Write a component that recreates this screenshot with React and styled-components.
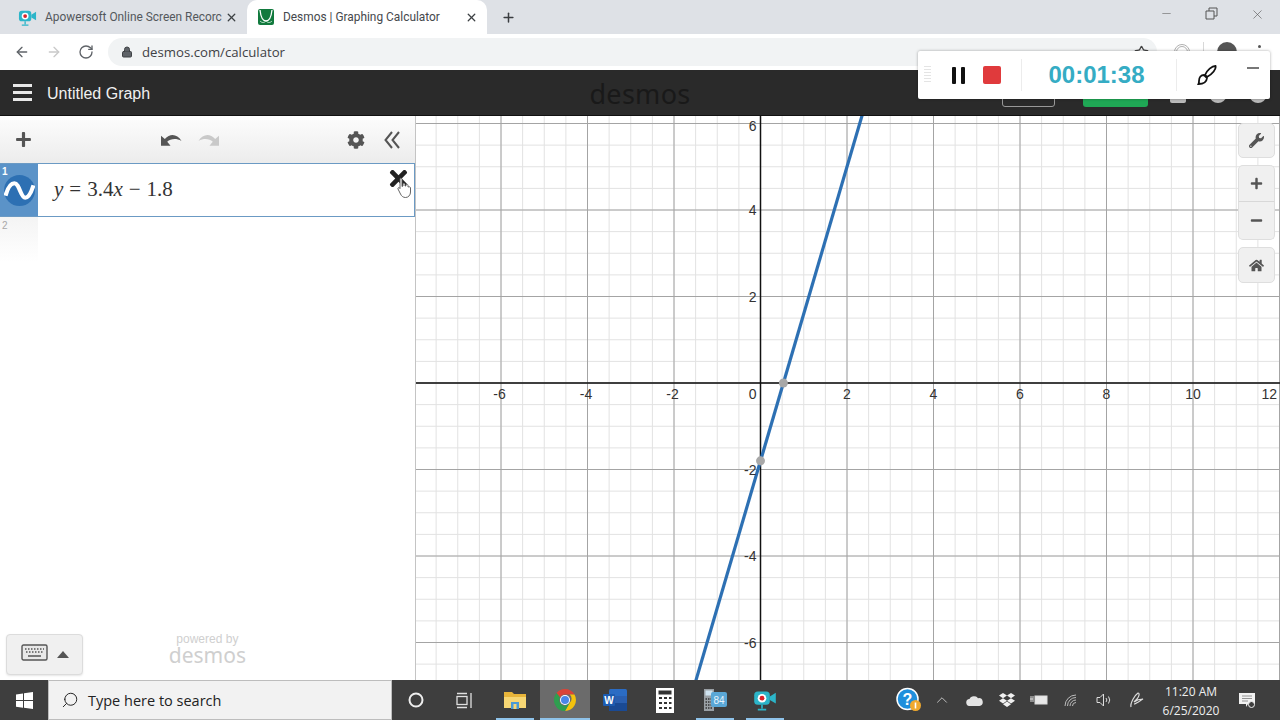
import styled, { createGlobalStyle } from "styled-components";
import { FaCog, FaHome, FaMinus, FaPlus, FaTimes, FaWrench } from "react-icons/fa";
import {
  ArrowLeft,
  ArrowRight,
  ChevronUp,
  Lock,
  Minus,
  Plus,
  RotateCw,
  Search,
  Star,
  X,
} from "lucide-react";

const GlobalStyle = createGlobalStyle`
  html, body {
    margin: 0;
    padding: 0;
    background: #fff;
    font-family: "Liberation Sans", Arial, sans-serif;
  }
`;

const Page = styled.div`
  position: relative;
  display: flex;
  flex-direction: column;
  width: 1280px;
  height: 720px;
  overflow: hidden;
`;

/* chrome tabs */
const TabStrip = styled.div`
  display: flex;
  align-items: stretch;
  flex: 0 0 34px;
  background: #dee1e6;
  color: #3c4043;
`;

const Tab = styled.div`
  display: flex;
  align-items: center;
  box-sizing: border-box;
  width: ${(p) => p.$width};
  padding: ${(p) => p.$padding};
  background: ${(p) => (p.$active ? "#fff" : "transparent")};
  border-radius: 10px 10px 0 0;
  font: 11.9px Roboto, "Noto Sans", sans-serif;
`;

const TabTitle = styled.span`
  flex: 1;
  margin-left: ${(p) => p.$gap};
  white-space: nowrap;
  color: ${(p) => (p.$active ? "#45484c" : "#54585c")};
`;

const NewTab = styled.div`
  display: flex;
  align-items: center;
  margin-left: 14px;
  color: #3a3d40;
`;

const WindowControls = styled.div`
  display: flex;
  align-items: flex-start;
  gap: 32px;
  margin-left: auto;
  padding: 7px 15px 0 0;
  color: #555;
`;

/* address bar */
const Toolbar = styled.div`
  display: flex;
  align-items: center;
  flex: 0 0 36px;
  box-sizing: border-box;
  padding-left: 14px;
  background: #fff;
`;

const NavIcons = styled.div`
  display: flex;
  align-items: center;
  gap: 16px;
  color: #5f6368;
`;

const AddressPill = styled.div`
  display: flex;
  align-items: center;
  gap: 9px;
  width: 1049px;
  height: 28px;
  box-sizing: border-box;
  margin-left: 14px;
  padding: 0 8px 0 13px;
  background: #f1f3f4;
  border-radius: 14px;
  font: 13.2px "Open Sans", "Noto Sans", sans-serif;
  color: #3f4245;
`;

const BookmarkStar = styled.span`
  display: flex;
  margin-left: auto;
  color: #444;
`;

const ToolbarEnd = styled.div`
  display: flex;
  align-items: center;
  gap: 13px;
  margin-left: 17px;
  color: #5f6368;
`;

const Ring = styled.span`
  width: 16px;
  height: 16px;
  box-sizing: border-box;
  border: 3px double #b0b0b0;
  border-radius: 50%;
`;

const ToolbarSeparator = styled.span`
  width: 1px;
  height: 20px;
  background: #d8d8d8;
`;

const Avatar = styled.span`
  width: 20px;
  height: 20px;
  border-radius: 50%;
  background: #555;
`;

const Dots = styled.span`
  display: flex;
  flex-direction: column;
  gap: 3px;
  margin-left: 8px;

  i {
    width: 3px;
    height: 3px;
    border-radius: 50%;
    background: #555;
  }
`;

/* desmos header */
const AppHeader = styled.header`
  position: relative;
  display: flex;
  align-items: center;
  flex: 0 0 46px;
  box-sizing: border-box;
  padding-left: 13px;
  background: #2a2a2a;
  border-bottom: 1px solid #111;
  color: #f0f0f0;
`;

const Burger = styled.div`
  display: flex;
  flex-direction: column;
  gap: 4px;
  width: 19px;
  margin-right: 15px;

  span {
    height: 3px;
    background: #e8e8e8;
  }
`;

const GraphTitle = styled.div`
  margin-top: 2px;
  font-size: 16px;
`;

const Logo = styled.div`
  position: absolute;
  left: 0;
  right: 0;
  top: 5px;
  text-align: center;
  font: 27px "Noto Sans", sans-serif;
  letter-spacing: 0.3px;
  color: #191919;
`;

const HeaderButton = styled.div`
  position: absolute;
  top: 21px;
  left: ${(p) => p.$left};
  width: ${(p) => p.$width};
  height: 16px;
  box-sizing: border-box;
  border: ${(p) => (p.$green ? "none" : "1px solid #999")};
  border-radius: 3px;
  background: ${(p) => (p.$green ? "#1fa855" : "transparent")};
`;

const HeaderDot = styled.div`
  position: absolute;
  top: 20px;
  left: ${(p) => p.$left};
  width: 16px;
  height: 13px;
  border-radius: ${(p) => (p.$square ? "2px" : "50%")};
  background: #bbb;
`;

const Main = styled.main`
  display: flex;
  flex: 1;
  min-height: 0;
`;

/* expression list */
const Panel = styled.aside`
  position: relative;
  display: flex;
  flex-direction: column;
  flex: 0 0 415px;
  border-right: 1px solid #c4c4c4;
  background: #fff;
`;

const PanelTools = styled.div`
  display: flex;
  align-items: center;
  flex: 0 0 47px;
  padding: 0 15px;
  color: #555;
  background: linear-gradient(#fdfdfd, #ececec);
`;

const UndoGroup = styled.div`
  display: flex;
  gap: 16px;
  margin: 0 0 3px 129px;
`;

const ToolEnd = styled.div`
  display: flex;
  align-items: center;
  gap: 19px;
  margin-left: auto;
`;

const Faded = styled.span`
  display: flex;
  color: #c9c9c9;
`;

const Expression = styled.div`
  display: flex;
  height: 54px;
  box-sizing: border-box;
  border: 1px solid #6b9ac4;
  border-left: none;
`;

const ExpressionTab = styled.div`
  position: relative;
  display: flex;
  align-items: center;
  justify-content: center;
  width: 38px;
  background: #5b93c8;
  color: #fff;
  font: bold 10px "Liberation Sans", sans-serif;
`;

const RowNumber = styled.span`
  position: absolute;
  top: 2px;
  left: 2px;
`;

const Formula = styled.div`
  flex: 1;
  display: flex;
  gap: 6px;
  padding: 13px 0 0 16px;
  font: 21px "Liberation Serif", serif;
  color: #333;

  i {
    font-style: italic;
  }
`;

const RemoveButton = styled.div`
  position: absolute;
  top: 50px;
  left: 386px;
  font-size: 25px;
  line-height: 0;
  color: #222;
`;

const Cursor = styled.svg`
  position: absolute;
  top: 61px;
  left: 397px;
`;

const EmptyRow = styled.div`
  width: 38px;
  height: 45px;
  box-sizing: border-box;
  padding: 3px 2px;
  font-size: 10px;
  color: #a8a8a8;
  background: linear-gradient(#f4f4f4, #fff);
`;

const PanelFoot = styled.div`
  display: flex;
  align-items: flex-end;
  justify-content: space-between;
  margin-top: auto;
  padding: 0 169px 5px 6px;
`;

const KeyboardButton = styled.div`
  display: flex;
  align-items: center;
  justify-content: center;
  gap: 9px;
  width: 77px;
  height: 41px;
  box-sizing: border-box;
  border: 1px solid #dcdcdc;
  border-radius: 4px;
  background: #f0f0f0;
  box-shadow: 0 1px 2px rgba(0, 0, 0, 0.1);
  color: #555;
`;

const KeyboardGlyph = styled.span`
  display: flex;
  margin-bottom: 5px;
`;

const Powered = styled.div`
  display: flex;
  flex-direction: column;
  align-items: center;
  margin-bottom: 10px;
  color: #cfcfcf;
`;

const PoweredBy = styled.span`
  font-size: 12px;
  line-height: 13px;
`;

const PoweredLogo = styled.span`
  font: 21px/19px "Noto Sans", sans-serif;
`;

/* graph paper */
const Graph = styled.section`
  position: relative;
  flex: 1;
  overflow: hidden;
  background: #fff;
`;

const GraphTools = styled.div`
  position: absolute;
  top: 7px;
  right: 5px;
  display: flex;
  flex-direction: column;
  gap: 7px;
`;

const GraphButton = styled.div`
  display: flex;
  align-items: center;
  justify-content: center;
  width: 37px;
  height: ${(p) => p.$height || "36px"};
  box-sizing: border-box;
  border: 1px solid #dedede;
  border-radius: 5px;
  background: #f0f0f0;
  color: #555;
  font-size: 15px;
`;

const ZoomGroup = styled.div`
  display: flex;
  flex-direction: column;

  & > div:first-child {
    border-radius: 5px 5px 0 0;
    border-bottom: 1px solid #d8d8d8;
  }

  & > div:last-child {
    border-radius: 0 0 5px 5px;
    border-top: none;
  }
`;

/* recorder widget */
const Recorder = styled.div`
  position: absolute;
  top: 51px;
  left: 918px;
  display: flex;
  align-items: center;
  width: 352px;
  height: 48px;
  background: #fff;
  border-radius: 2px;
  box-shadow: 0 0 3px rgba(0, 0, 0, 0.35);
`;

const Grip = styled.div`
  width: 7px;
  height: 18px;
  margin-left: 6px;
  background: repeating-linear-gradient(#e4e4e4 0 1px, #fff 1px 3px);
`;

const PauseIcon = styled.div`
  display: flex;
  gap: 5px;
  margin-left: 21px;

  span {
    width: 4px;
    height: 17px;
    border-radius: 1px;
    background: #111;
  }
`;

const StopIcon = styled.div`
  width: 18px;
  height: 18px;
  margin-left: 18px;
  border-radius: 2px;
  background: #e03a3c;
`;

const Divider = styled.div`
  width: 1px;
  height: 32px;
  background: #ececec;
  margin-left: ${(p) => p.$left};
`;

const Timer = styled.div`
  box-sizing: border-box;
  width: 154px;
  padding-right: 5px;
  text-align: center;
  font-size: 24px;
  font-weight: bold;
  color: #35acc4;
`;

const BrushBox = styled.div`
  display: flex;
  margin-left: 20px;
`;

const RecorderMin = styled.div`
  position: absolute;
  top: 16px;
  right: 11px;
  width: 12px;
  height: 1.5px;
  background: #777;
`;

/* windows taskbar */
const Taskbar = styled.footer`
  display: flex;
  align-items: center;
  flex: 0 0 40px;
  background: #3e3e3e;
  color: #f2f2f2;
`;

const StartButton = styled.div`
  display: flex;
  align-items: center;
  justify-content: center;
  width: 48px;
  height: 100%;
`;

const SearchBox = styled.div`
  display: flex;
  align-items: center;
  gap: 9px;
  width: 344px;
  height: 100%;
  box-sizing: border-box;
  padding-left: 12px;
  background: #f2f2f2;
  border: 1px solid #bdbdbd;
  color: #222;
  font: 14.5px "Open Sans", "Noto Sans", sans-serif;
`;

const TaskIcon = styled.div`
  position: relative;
  display: flex;
  align-items: center;
  justify-content: center;
  width: ${(p) => p.$width || "50px"};
  height: 100%;
  margin-right: ${(p) => p.$after || "0"};
  background: ${(p) => (p.$active ? "#6b6b6b" : "transparent")};

  &::after {
    content: "";
    display: ${(p) => (p.$running ? "block" : "none")};
    position: absolute;
    left: ${(p) => (p.$active ? "0" : "6px")};
    right: ${(p) => (p.$active ? "0" : "6px")};
    bottom: 0;
    height: 2px;
    background: #8fc3ea;
  }
`;

const Tray = styled.div`
  display: flex;
  align-items: center;
  height: 100%;
  margin-left: auto;
  padding-right: 12px;
`;

const TrayIcon = styled.div`
  display: flex;
  align-items: center;
  justify-content: center;
  width: ${(p) => p.$width || "32.5px"};
  color: #e6e6e6;
`;

const Clock = styled.div`
  width: 70px;
  margin-left: 3px;
  padding-top: 1px;
  text-align: center;
  white-space: nowrap;
  font: 12px/19px "Open Sans", "Noto Sans", sans-serif;
  color: #eee;
`;

const ORIGIN_X = 344.5;
const ORIGIN_Y = 267;
const UNIT = 43.25;
const GRAPH_W = 864;
const GRAPH_H = 564;

function range(from, to, step) {
  const out = [];
  for (let v = from; v <= to; v += step) out.push(v);
  return out;
}

function Plot() {
  const px = (x) => ORIGIN_X + x * UNIT;
  const py = (y) => ORIGIN_Y - y * UNIT;
  const minorX = range(-8, 12.5, 0.5);
  const minorY = range(-7, 6.5, 0.5);
  const majorX = range(-8, 12, 2);
  const majorY = range(-6, 6, 2);
  const xLabels = majorX.filter((v) => v !== 0 && v > -8 && v < 12);
  const yLabels = majorY.filter((v) => v !== 0);

  return (
    <svg width={GRAPH_W} height={GRAPH_H} style={{ display: "block" }}>
      {minorX.map((v) => (
        <line key={v} x1={px(v)} x2={px(v)} y1={0} y2={GRAPH_H} stroke="#e2e2e2" />
      ))}
      {minorY.map((v) => (
        <line key={v} y1={py(v)} y2={py(v)} x1={0} x2={GRAPH_W} stroke="#e2e2e2" />
      ))}
      {majorX.map((v) => (
        <line key={v} x1={px(v)} x2={px(v)} y1={0} y2={GRAPH_H} stroke="#a4a4a4" />
      ))}
      {majorY.map((v) => (
        <line key={v} y1={py(v)} y2={py(v)} x1={0} x2={GRAPH_W} stroke="#a4a4a4" />
      ))}
      <line x1={px(0)} x2={px(0)} y1={0} y2={GRAPH_H} stroke="#111" strokeWidth="1.5" />
      <line y1={py(0)} y2={py(0)} x1={0} x2={GRAPH_W} stroke="#111" strokeWidth="1.5" />
      <line
        x1={px(-1.55)}
        y1={py(3.4 * -1.55 - 1.8)}
        x2={px(2.4)}
        y2={py(3.4 * 2.4 - 1.8)}
        stroke="#2d70b3"
        strokeWidth="3.2"
      />
      <circle cx={px(1.8 / 3.4)} cy={py(0)} r="4.5" fill="#a8a8a8" />
      <circle cx={px(0)} cy={py(-1.8)} r="4.5" fill="#a8a8a8" />
      <g fontFamily="Liberation Sans, sans-serif" fontSize="14" fill="#333">
        {xLabels.map((v) => (
          <text key={v} x={px(v) - (v < 0 ? 1.5 : 0)} y={py(0) + 16} textAnchor="middle">
            {v}
          </text>
        ))}
        <text x={GRAPH_W - 3} y={py(0) + 16} textAnchor="end">
          12
        </text>
        {yLabels.map((v) => (
          <text key={v} x={px(0) - 4} y={Math.max(py(v) + 5, 15)} textAnchor="end">
            {v}
          </text>
        ))}
        <text x={px(0) - 4} y={py(0) + 16} textAnchor="end">
          0
        </text>
      </g>
    </svg>
  );
}

function DesmosFavicon() {
  return (
    <svg width="16" height="16" viewBox="0 0 16 16">
      <rect width="16" height="16" rx="2" fill="#127a3e" />
      <path d="M2 1c1 9 3 11 6 11s5-2 6-11" fill="none" stroke="#fff" strokeWidth="1.3" />
      <path d="M2 12c2 2 4 2 6 0 2 2 4 2 6 0" fill="none" stroke="#bfe6cc" strokeWidth="1" />
    </svg>
  );
}

function RecorderIcon({ size = 20 }) {
  return (
    <svg width={size} height={size} viewBox="0 0 20 20">
      <rect x="1" y="3" width="13" height="11" rx="3" fill="#2cb5c9" />
      <path d="M14 7l5-3v9l-5-3z" fill="#2cb5c9" />
      <circle cx="7.5" cy="8.5" r="3.6" fill="#fff" />
      <circle cx="7.5" cy="8.5" r="2" fill="#d8232a" />
      <path d="M7.5 14v3M4 18h7" stroke="#2cb5c9" strokeWidth="1.4" />
    </svg>
  );
}

function WaveBadge() {
  return (
    <svg width="31" height="31" viewBox="0 0 30 30">
      <circle cx="15" cy="15" r="15" fill="#2d70b3" />
      <path
        d="M1.500 20C4 11 7 8 10 8c5 0 6 14 10.500 14 3 0 5.500-4 8-12"
        fill="none"
        stroke="#fff"
        strokeWidth="4"
      />
    </svg>
  );
}

function HandCursor() {
  return (
    <Cursor width="16" height="22" viewBox="0 0 16 22">
      <path
        d="M3 1.5c1-.8 2 0 2 1v7l1-.5V6.500c1-.7 2 0 2 .8V9l1-.2V7.500c1-.6 2 0 2 .8V10l1-.2c.8-.2 1.500.4 1.500 1.200V15c0 3-2 5.500-5 5.500-2.500 0-4-1.500-5-3.500L1 12c-.5-1 .8-2 1.700-1L3 11.500z"
        fill="#fff"
        stroke="#555"
        strokeWidth="0.9"
      />
    </Cursor>
  );
}

function UndoArrow({ flip }) {
  return (
    <svg
      width="21"
      height="15"
      viewBox="0 0 22 15"
      fill="currentColor"
      style={flip ? { transform: "scaleX(-1)" } : undefined}
    >
      <path d="M0 4.500V15h10l-3.500-4C10 7.500 16 7 21.500 10 17 3 10 1.500 4 8z" />
    </svg>
  );
}

function CollapseIcon() {
  return (
    <svg width="16" height="18" viewBox="0 0 16 18" fill="none" stroke="#555" strokeWidth="2">
      <path d="M8 1L1.500 9 8 17M15 1L8.500 9l6.500 8" />
    </svg>
  );
}

function KeyboardIcon() {
  return (
    <svg width="27" height="17" viewBox="0 0 27 17">
      <rect x="1" y="1" width="25" height="15" rx="1.5" fill="#e8e8e8" stroke="#555" strokeWidth="1.4" />
      <path d="M4 5h19M5 8h17" stroke="#555" strokeWidth="1.5" strokeDasharray="1.500 1.500" />
      <path d="M7 12h13" stroke="#555" strokeWidth="1.5" />
    </svg>
  );
}

function BrushIcon() {
  return (
    <svg width="20" height="20" viewBox="0 0 20 20">
      <path d="M8 10C10 5 15 1 18.500 1c1 3-3 8-8.500 11z" fill="#fff" stroke="#111" strokeWidth="1.800" />
      <path d="M7 10c-3 0-5 2-5 6 0 1 0 2-.5 3 3 0 8-1 8.500-6z" fill="#fff" stroke="#111" strokeWidth="1.800" />
    </svg>
  );
}

function WindowsLogo() {
  return (
    <svg width="17" height="17" viewBox="0 0 17 17" fill="#fff">
      <path d="M0 2.400l7-1v6.700H0zM8 1.200L17 0v8.100H8zM0 9h7v6.700l-7-1zM8 9h9v8l-9-1.300z" />
    </svg>
  );
}

function ExplorerIcon() {
  return (
    <svg width="24" height="20" viewBox="0 0 24 20">
      <path d="M1 2h8l2 2h12v14H1z" fill="#e8b53a" />
      <path d="M1 7h22v11H1z" fill="#f7d774" />
      <path d="M8 12h8v7H8z" fill="#4a9bd4" />
      <path d="M10.500 14h3v5h-3z" fill="#f7d774" />
    </svg>
  );
}

function ChromeIcon() {
  return (
    <svg width="22" height="22" viewBox="0 0 22 22">
      <path d="M11 0a11 11 0 0 1 9.500 5.500H11a5.500 5.500 0 0 0-5 3L2.500 4A11 11 0 0 1 11 0z" fill="#db4437" />
      <path d="M20.500 5.500A11 11 0 0 1 11 22l4.700-8.200a5.500 5.500 0 0 0 0-8.300z" fill="#f4c20d" />
      <path d="M11 22A11 11 0 0 1 2.500 4L6 8.500a5.500 5.500 0 0 0 6 8l3.700-2.700z" fill="#2f9e4f" />
      <circle cx="11" cy="11" r="5" fill="#fff" />
      <circle cx="11" cy="11" r="4" fill="#4a86e8" />
    </svg>
  );
}

function WordIcon() {
  return (
    <svg width="24" height="22" viewBox="0 0 24 22">
      <rect x="6" y="0" width="18" height="22" rx="1.500" fill="#2b6cc4" />
      <rect x="6" y="14" width="18" height="8" fill="#1a4a94" />
      <rect x="6" y="7" width="18" height="7" fill="#2a5fb0" />
      <rect x="0" y="5" width="12" height="12" rx="1" fill="#1c5bb0" />
      <text x="6" y="14.500" textAnchor="middle" fontSize="10" fontWeight="bold" fill="#fff" fontFamily="Liberation Sans, sans-serif">
        W
      </text>
    </svg>
  );
}

function CalculatorIcon() {
  return (
    <svg width="18" height="25" viewBox="0 0 18 25">
      <rect width="18" height="25" fill="#fff" />
      <rect x="2.500" y="2.500" width="13" height="4" fill="#333" />
      <path d="M3 10h3M8 10h3M13 10h2.500M3 15h3M8 15h3M13 15h2.500M3 20h3M8 20h3M13 20h2.500" stroke="#333" strokeWidth="2" />
    </svg>
  );
}

function PhoneCalcIcon() {
  return (
    <svg width="24" height="24" viewBox="0 0 24 24">
      <rect x="1" y="1" width="10" height="22" fill="#9aa0a5" />
      <rect x="2.500" y="2.500" width="7" height="5" fill="#cfe3f0" />
      <path d="M2.500 11h7M2.500 14h7M2.500 17h7M2.500 20h7" stroke="#333" strokeWidth="1.500" strokeDasharray="1.500 1" />
      <rect x="8" y="4" width="16" height="15" rx="2" fill="#5aa7d6" />
      <text x="16" y="15.500" textAnchor="middle" fontSize="10" fill="#e8f4fb" fontFamily="Liberation Sans, sans-serif">
        84
      </text>
    </svg>
  );
}

function TaskViewIcon() {
  return (
    <svg width="17" height="17" viewBox="0 0 17 17" fill="none" stroke="#e0e0e0" strokeWidth="1.300">
      <rect x="1" y="4.500" width="10" height="8" />
      <path d="M1 1.500h10M1 15.500h10M15 1v15" />
    </svg>
  );
}

function HelpIcon() {
  return (
    <svg width="26" height="26" viewBox="0 0 26 26">
      <circle cx="11.500" cy="12" r="10.500" fill="#1f8fdc" stroke="#fff" strokeWidth="1.500" />
      <text x="11.500" y="18" textAnchor="middle" fontSize="16" fontWeight="bold" fill="#fff" fontFamily="Liberation Sans, sans-serif">
        ?
      </text>
      <circle cx="19.500" cy="18.500" r="5.500" fill="#f0a92e" />
      <path d="M19.500 15.500v6" stroke="#fff" strokeWidth="1.600" />
    </svg>
  );
}

function CloudIcon() {
  return (
    <svg width="17" height="11" viewBox="0 0 17 11" fill="#e4e4e4">
      <path d="M4 11a3.500 3.500 0 0 1-.5-7A5 5 0 0 1 12 3.200 3.900 3.900 0 0 1 13.500 11z" />
    </svg>
  );
}

function DropboxIcon() {
  return (
    <svg width="16" height="14" viewBox="0 0 16 14" fill="#f0f0f0">
      <path d="M4 0l4 2.600L4 5.200 0 2.600zM12 0l4 2.600-4 2.600-4-2.600zM0 7.800l4-2.600 4 2.600-4 2.600zM16 7.800l-4-2.600-4 2.600 4 2.600zM4 11.200L8 8.600l4 2.600L8 14z" />
    </svg>
  );
}

function BatteryIcon() {
  return (
    <svg width="18" height="12" viewBox="0 0 18 12">
      <rect x="5" y="2" width="12" height="8" fill="#e8e8e8" stroke="#ddd" />
      <path d="M0 5h3M1 2v6M3 2v6" stroke="#ddd" strokeWidth="1" />
    </svg>
  );
}

function WifiIcon() {
  return (
    <svg width="15" height="13" viewBox="0 0 15 13" fill="none" stroke="#bbb" strokeWidth="1">
      <path d="M1 12A11 11 0 0 1 12 1M3.500 12A8.500 8.500 0 0 1 12 3.500M6 12A6 6 0 0 1 12 6M8.500 12A3.500 3.500 0 0 1 12 8.500" />
    </svg>
  );
}

function VolumeIcon() {
  return (
    <svg width="16" height="14" viewBox="0 0 16 14" fill="none" stroke="#ddd" strokeWidth="1">
      <path d="M1 4.500h3L7.500 1v12L4 9.500H1zM10 5a3 3 0 0 1 0 4M12.500 3.500a6 6 0 0 1 0 7" />
    </svg>
  );
}

function PenIcon() {
  return (
    <svg width="15" height="16" viewBox="0 0 15 16" fill="none" stroke="#ddd" strokeWidth="1.200">
      <path d="M2 15C1 11 6 3 9 1c2 0 1 4-1 6l-3 3c4-3 6-3 9-3-2 1-7 5-9 5" />
    </svg>
  );
}

function NotificationIcon() {
  return (
    <svg width="18" height="17" viewBox="0 0 18 17">
      <path d="M1 1h16v11H10l-2 3v-3H1z" fill="#f2f2f2" />
      <path d="M4 4h10M4 6.500h10M4 9h6" stroke="#888" strokeWidth="0.900" />
      <circle cx="13.500" cy="12.500" r="3" fill="#3e3e3e" stroke="#f2f2f2" />
    </svg>
  );
}

export default function App() {
  return (
    <Page>
      <GlobalStyle />

      <TabStrip>
        <Tab $width="247px" $padding="0 9px 0 18px">
          <RecorderIcon size={19} />
          <TabTitle $gap="8px">Apowersoft Online Screen Recorc</TabTitle>
          <X size={13} strokeWidth={2.4} />
        </Tab>
        <Tab $active $width="240px" $padding="0 9px 0 11px">
          <DesmosFavicon />
          <TabTitle $active $gap="9px">Desmos | Graphing Calculator</TabTitle>
          <X size={13} strokeWidth={2.4} />
        </Tab>
        <NewTab>
          <Plus size={15} strokeWidth={2.4} />
        </NewTab>
        <WindowControls>
          <Minus size={13} strokeWidth={1} />
          <svg width="13" height="13" viewBox="0 0 13 13" fill="none" stroke="#555">
            <path d="M1 4h8v8H1zM4 4V1h8v8H9" />
          </svg>
          <X size={15} strokeWidth={1} />
        </WindowControls>
      </TabStrip>

      <Toolbar>
        <NavIcons>
          <ArrowLeft size={16} />
          <Faded>
            <ArrowRight size={16} />
          </Faded>
          <RotateCw size={16} />
        </NavIcons>
        <AddressPill>
          <Lock size={12} fill="#5f6368" />
          desmos.com/calculator
          <BookmarkStar>
            <Star size={15} />
          </BookmarkStar>
        </AddressPill>
        <ToolbarEnd>
          <Ring />
          <ToolbarSeparator />
          <Avatar />
          <Dots>
            <i />
            <i />
            <i />
          </Dots>
        </ToolbarEnd>
      </Toolbar>

      <AppHeader>
        <Burger>
          <span />
          <span />
          <span />
        </Burger>
        <GraphTitle>Untitled Graph</GraphTitle>
        <Logo>desmos</Logo>
        <HeaderButton $left="1002px" $width="53px" />
        <HeaderButton $green $left="1083px" $width="65px" />
        <HeaderDot $square $left="1170px" />
        <HeaderDot $left="1210px" />
        <HeaderDot $left="1250px" />
      </AppHeader>

      <Main>
        <Panel>
          <PanelTools>
            <FaPlus size={17} />
            <UndoGroup>
              <UndoArrow />
              <Faded>
                <UndoArrow flip />
              </Faded>
            </UndoGroup>
            <ToolEnd>
              <FaCog size={18} />
              <CollapseIcon />
            </ToolEnd>
          </PanelTools>

          <Expression>
            <ExpressionTab>
              <RowNumber>1</RowNumber>
              <WaveBadge />
            </ExpressionTab>
            <Formula>
              <i>y</i>
              <span>=</span>
              <span>
                3.4<i>x</i>
              </span>
              <span>−</span>
              <span>1.8</span>
            </Formula>
          </Expression>
          <RemoveButton>
            <FaTimes />
          </RemoveButton>
          <HandCursor />
          <EmptyRow>2</EmptyRow>

          <PanelFoot>
            <KeyboardButton>
              <KeyboardGlyph>
                <KeyboardIcon />
              </KeyboardGlyph>
              <svg width="12" height="7" viewBox="0 0 12 7" fill="#555">
                <path d="M6 0l6 7H0z" />
              </svg>
            </KeyboardButton>
            <Powered>
              <PoweredBy>powered by</PoweredBy>
              <PoweredLogo>desmos</PoweredLogo>
            </Powered>
          </PanelFoot>
        </Panel>

        <Graph>
          <Plot />
          <GraphTools>
            <GraphButton $height="35px">
              <FaWrench />
            </GraphButton>
            <ZoomGroup>
              <GraphButton $height="37px">
                <FaPlus size={13} />
              </GraphButton>
              <GraphButton $height="38px">
                <FaMinus size={13} />
              </GraphButton>
            </ZoomGroup>
            <GraphButton>
              <FaHome />
            </GraphButton>
          </GraphTools>
        </Graph>
      </Main>

      <Taskbar>
        <StartButton>
          <WindowsLogo />
        </StartButton>
        <SearchBox>
          <Search size={18} strokeWidth={1.3} style={{ transform: "scaleX(-1)" }} />
          Type here to search
        </SearchBox>
        <TaskIcon $width="48px">
          <svg width="16" height="16" viewBox="0 0 16 16" fill="none" stroke="#eee" strokeWidth="2">
            <circle cx="8" cy="8" r="6.500" />
          </svg>
        </TaskIcon>
        <TaskIcon $width="48px" $after="2px">
          <TaskViewIcon />
        </TaskIcon>
        <TaskIcon $running>
          <ExplorerIcon />
        </TaskIcon>
        <TaskIcon $active $running>
          <ChromeIcon />
        </TaskIcon>
        <TaskIcon>
          <WordIcon />
        </TaskIcon>
        <TaskIcon>
          <CalculatorIcon />
        </TaskIcon>
        <TaskIcon $running>
          <PhoneCalcIcon />
        </TaskIcon>
        <TaskIcon $running>
          <RecorderIcon size={24} />
        </TaskIcon>
        <Tray>
          <TrayIcon>
            <HelpIcon />
          </TrayIcon>
          <TrayIcon>
            <ChevronUp size={18} strokeWidth={1} />
          </TrayIcon>
          <TrayIcon>
            <CloudIcon />
          </TrayIcon>
          <TrayIcon>
            <DropboxIcon />
          </TrayIcon>
          <TrayIcon>
            <BatteryIcon />
          </TrayIcon>
          <TrayIcon>
            <WifiIcon />
          </TrayIcon>
          <TrayIcon>
            <VolumeIcon />
          </TrayIcon>
          <TrayIcon>
            <PenIcon />
          </TrayIcon>
          <Clock>
            11:20 AM
            <br />
            6/25/2020
          </Clock>
          <TrayIcon $width="42px">
            <NotificationIcon />
          </TrayIcon>
        </Tray>
      </Taskbar>

      <Recorder>
        <Grip />
        <PauseIcon>
          <span />
          <span />
        </PauseIcon>
        <StopIcon />
        <Divider $left="20px" />
        <Timer>00:01:38</Timer>
        <Divider $left="0" />
        <BrushBox>
          <BrushIcon />
        </BrushBox>
        <RecorderMin />
      </Recorder>
    </Page>
  );
}
